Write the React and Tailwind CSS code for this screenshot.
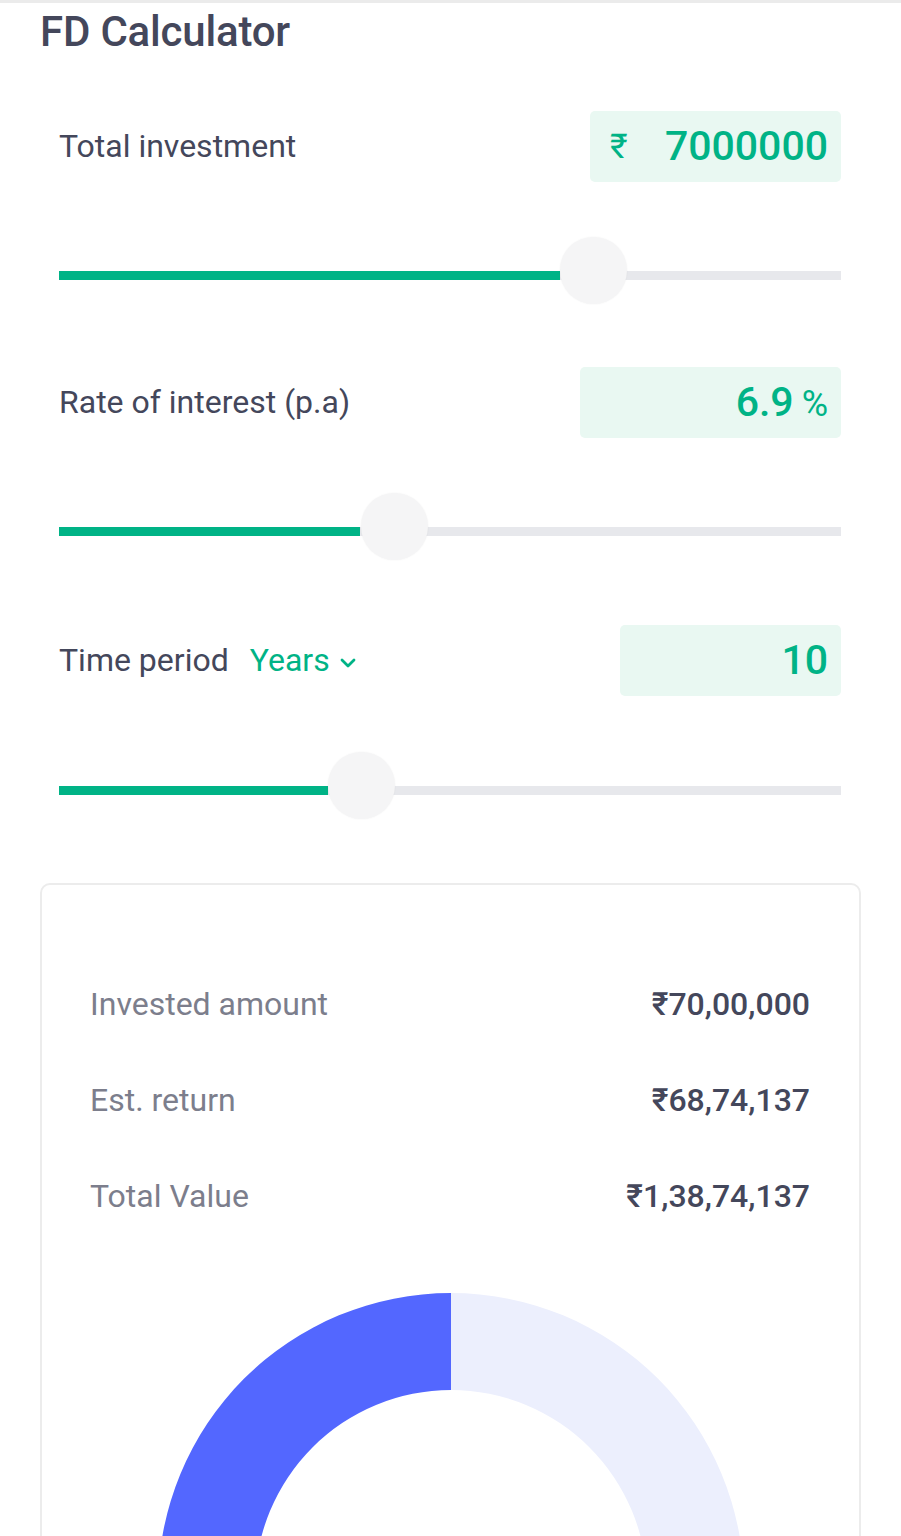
import React from "react";

const font = { fontFamily: "Roboto, 'Noto Sans', sans-serif" };

function Slider({ pct, thumb }) {
  return (
    <div className="relative h-[67px] flex items-center">
      <div className="flex w-full h-[9px] mt-[10px]">
        <div className="h-full bg-[#00b386]" style={{ width: pct + "px" }} />
        <div className="h-full flex-1 bg-[#e7e8ec]" />
      </div>
      <div
        className="absolute top-0 h-[67px] w-[67px] rounded-full bg-[#f5f5f6] shadow-[0_0_2px_rgba(0,0,0,0.06)]"
        style={{ left: thumb + "px" }}
      />
    </div>
  );
}

function Row({ label, value, box }) {
  return (
    <div className="flex items-center justify-between h-[72px]">
      {label}
      <div
        className={`h-[71px] rounded-[5px] bg-[#e9f8f2] flex items-center justify-end pr-[13px] text-[#00b386] ${box}`}
      >
        {value}
      </div>
    </div>
  );
}

export default function App() {
  return (
    <div className="w-[901px] h-[1536px] overflow-hidden bg-white" style={font}>
      <div className="h-[3px] bg-[#ebebeb]" />
      <h1 className="pl-[40px] mt-[5px] text-[42px] leading-[48px] font-medium text-[#44475b] tracking-[-0.2px]">
        FD Calculator
      </h1>
      <div className="pl-[59px] pr-[60px] mt-[54px]">
        <Row
          label={<span className="text-[32px] text-[#44475b]">Total investment</span>}
          box="w-[251px]"
          value={
            <div className="flex items-center w-full pl-[20px]">
              <span className="text-[34px] leading-none">₹</span>
              <span className="ml-auto text-[41px] font-medium leading-none">7000000</span>
            </div>
          }
        />
        <div className="mt-[55px]">
          <Slider pct={501} thumb={501} />
        </div>
        <div className="mt-[62px]">
          <Row
            label={<span className="text-[32px] text-[#44475b]">Rate of interest (p.a)</span>}
            box="w-[261px]"
            value={
              <div className="flex items-baseline">
                <span className="text-[41px] font-medium leading-none">6.9</span>
                <span className="ml-[8px] text-[36px] leading-none">%</span>
              </div>
            }
          />
        </div>
        <div className="mt-[55px]">
          <Slider pct={301} thumb={302} />
        </div>
        <div className="mt-[64px]">
          <Row
            label={
              <div className="flex items-center">
                <span className="text-[32px] text-[#44475b]">Time period</span>
                <span className="ml-[21px] text-[32px] text-[#00b386]">Years</span>
                <svg className="ml-[9px] mt-[6px]" width="18" height="12" viewBox="0 0 18 12">
                  <path d="M3 3 L9 9 L15 3" fill="none" stroke="#00b386" strokeWidth="2.8" strokeLinecap="round" strokeLinejoin="round" />
                </svg>
              </div>
            }
            box="w-[221px]"
            value={<span className="text-[41px] font-medium leading-none">10</span>}
          />
        </div>
        <div className="mt-[56px]">
          <Slider pct={269} thumb={269} />
        </div>
      </div>
      <div className="mx-[40px] mt-[64px] border-2 border-[#ececec] rounded-[10px] h-[1000px] px-[48px] pt-[95px] flex flex-col">
        <div className="flex flex-col gap-[48px]">
          {[
            ["Invested amount", "₹70,00,000"],
            ["Est. return", "₹68,74,137"],
            ["Total Value", "₹1,38,74,137"],
          ].map(([l, v]) => (
            <div key={l} className="flex items-center justify-between h-[48px] pr-[1px]">
              <span className="text-[32px] text-[#7c7e8c]">{l}</span>
              <span className="text-[32px] font-medium text-[#44475b]">{v}</span>
            </div>
          ))}
        </div>
        <div className="flex justify-center mt-[73px]">
          <svg width="586" height="586" viewBox="0 0 586 586">
            <path d="M293 0 A293 293 0 0 1 293 586 L293 489 A196 196 0 0 0 293 97 Z" fill="#ecefFD" />
            <path d="M293 0 A293 293 0 0 0 293 586 L293 489 A196 196 0 0 1 293 97 Z" fill="#5367ff" />
          </svg>
        </div>
      </div>
    </div>
  );
}
